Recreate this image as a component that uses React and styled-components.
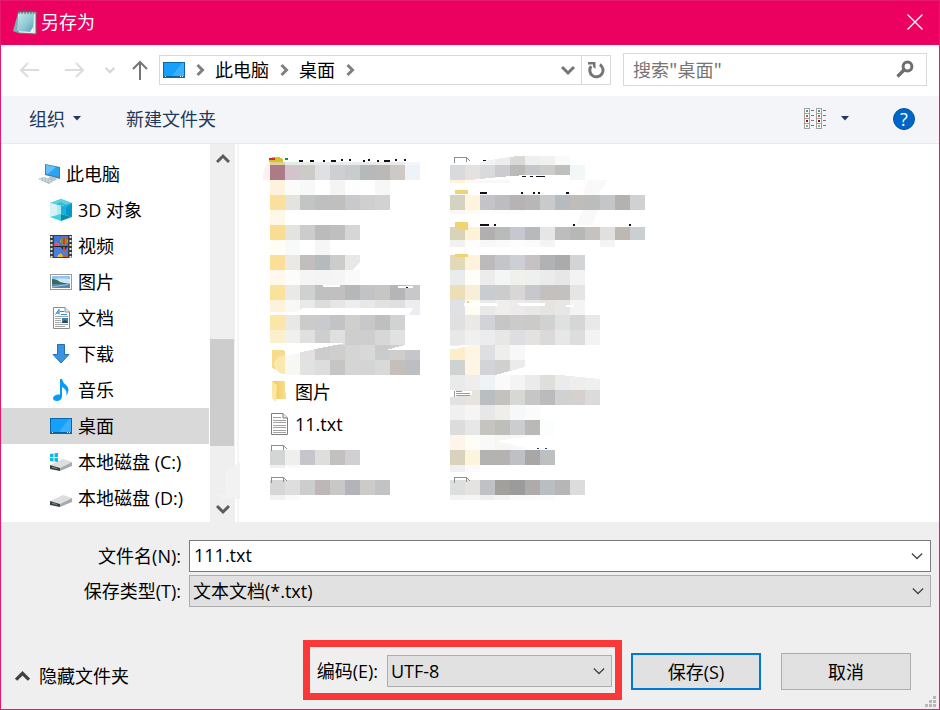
import React, { useState } from 'react';
import styled, { createGlobalStyle } from 'styled-components';

const GlobalStyle = createGlobalStyle`
  * {
    box-sizing: border-box;
  }

  body {
    margin: 0;
    background: #efefef;
  }

  body, button, input, select {
    font-family: "Open Sans", "Noto Sans CJK SC", sans-serif;
    font-size: 18px;
    line-height: 24px;
    color: #000;
  }

  svg {
    display: block;
    flex: none;
  }
`;

const Dialog = styled.div`
  position: relative;
  display: flex;
  flex-direction: column;
  min-height: 100vh;
  border: 1px solid #e8186d;
  background: #efefef;
`;

const PlainButton = styled.button`
  display: flex;
  align-items: center;
  justify-content: center;
  padding: 0;
  border: 0;
  background: transparent;
`;

const TitleBar = styled.header`
  display: flex;
  align-items: center;
  gap: 4px;
  height: 44px;
  padding: 0 12px 2px;
  background: #ec0060;
`;

const Title = styled.h1`
  flex: 1;
  margin: 0;
  font-size: 18px;
  font-weight: 400;
  color: #fff;
`;

const CloseButton = styled(PlainButton)`
  width: 24px;
  height: 24px;
`;

const NavBar = styled.div`
  display: flex;
  align-items: center;
  height: 51px;
  padding: 0 12px 2px 5px;
  background: #fff;
`;

const NavButton = styled(PlainButton)`
  width: ${props => props.$width}px;
  height: 30px;
`;

const Address = styled.div`
  display: flex;
  flex: 1;
  align-items: center;
  height: 30px;
  margin-right: 12px;
  padding-left: 3px;
  border: 1px solid #d9d9d9;
`;

const CrumbArrow = styled.span`
  display: flex;
  justify-content: center;
  width: 30px;
`;

const AddressMenu = styled(PlainButton)`
  width: 26px;
  height: 28px;
  margin-left: auto;
`;

const Refresh = styled(PlainButton)`
  width: 29px;
  height: 28px;
  border-left: 1px solid #d9d9d9;
`;

const SearchBox = styled.div`
  display: flex;
  align-items: center;
  width: 304px;
  height: 33px;
  padding: 0 12px 2px 9px;
  border: 1px solid #d9d9d9;
`;

const SearchInput = styled.input`
  flex: 1;
  min-width: 0;
  padding: 0;
  border: 0;
  outline: 0;
  background: transparent;
  font-family: "Noto Sans CJK SC", sans-serif;

  &::placeholder {
    color: #757575;
    opacity: 1;
  }
`;

const ToolBar = styled.div`
  display: flex;
  align-items: center;
  height: 48px;
  padding: 0 24px 2px 28px;
  border-bottom: 1px solid #e8e9eb;
  background: #f4f5f8;
`;

const ToolButton = styled(PlainButton)`
  gap: 8px;
  margin-right: ${props => props.$after || 0}px;
  color: #1e395b;
`;

const ToolSpace = styled.div`
  flex: 1;
`;

const Body = styled.div`
  display: flex;
  flex: 1;
  background: #fff;
`;

const Tree = styled.ul`
  width: 209px;
  margin: 0;
  padding: 12px 1px 6px 0;
  list-style: none;
`;

const TreeItem = styled(PlainButton)`
  justify-content: flex-start;
  gap: 6px;
  width: 100%;
  height: 36px;
  padding-left: ${props => (props.$root ? 37 : 49)}px;
  background: ${props => (props.$active ? '#d9d9d9' : 'transparent')};
`;

const IconBox = styled.span`
  display: flex;
  flex: none;
  justify-content: center;
  width: ${props => props.$width || 22}px;
`;

const ScrollBar = styled.div`
  position: relative;
  display: flex;
  flex-direction: column;
  width: 25px;
  background: #efefef;
`;

const ScrollGap = styled.div`
  flex: ${props => props.$grow};
`;

const ScrollThumb = styled.div`
  width: 24px;
  height: 107px;
  background: #cdcdcd;
`;

const ScrollButton = styled(PlainButton)`
  height: ${props => props.$height}px;
`;

const Smudge = styled.svg`
  position: absolute;
  right: -5px;
  bottom: 22px;
`;

const Splitter = styled.div`
  width: 4px;
  margin-right: 31px;
  border: solid #fff;
  border-width: 0 0 0 2px;
  background: #f5f5f5;
`;

const Files = styled.div`
  display: grid;
  flex: 1;
  grid-template-columns: 180px 1fr;
`;

const FileColumn = styled.div`
  display: flex;
  flex-direction: column;
`;

const FileRow = styled(PlainButton)`
  justify-content: flex-start;
  gap: 7px;
  height: 32px;
`;

const MosaicSvg = styled.svg`
  overflow: visible;
`;

const Fields = styled.div`
  display: grid;
  grid-template-columns: 180px 1fr;
  gap: 3px 8px;
  align-items: center;
  padding: 18px 8px 33px 0;
`;

const Label = styled.label`
  text-align: right;
  white-space: nowrap;
`;

const Combo = styled.div`
  display: flex;
  height: 32px;
  border: 1px solid #7a7a7a;
  background: #fff;
`;

const NameInput = styled.input`
  flex: 1;
  min-width: 0;
  padding: 0 4px 2px;
  border: 0;
  outline: 0;
  background: transparent;
`;

const ComboButton = styled(PlainButton)`
  width: 26px;
`;

const SelectBox = styled.div`
  display: grid;
  align-items: center;
  width: ${props => props.$width || 'auto'};

  > * {
    grid-area: 1 / 1;
  }

  > svg {
    justify-self: end;
    margin-right: 7px;
    pointer-events: none;
  }
`;

const Select = styled.select`
  appearance: none;
  width: 100%;
  height: 32px;
  padding: 0 30px 0 3px;
  border: 1px solid #adadad;
  border-radius: 0;
  outline: 0;
  background: #e1e1e1;
`;

const Footer = styled.footer`
  display: flex;
  align-items: center;
  height: 69px;
  padding: 0 28px 6px 14px;
`;

const HideButton = styled(PlainButton)`
  align-self: flex-end;
  gap: 9px;
  height: 54px;
  margin-right: auto;
`;

const Encoding = styled.div`
  display: flex;
  align-items: center;
  align-self: flex-start;
  gap: 9px;
  height: 60px;
  margin-right: 9px;
  padding: 2px 3px 0 7px;
  border: 7px solid #fb3838;
`;

const PushButton = styled.button`
  width: 130px;
  height: 37px;
  padding: 0;
  border: ${props => (props.$primary ? '2px solid #0078d7' : '1px solid #adadad')};
  background: #e1e1e1;

  & + & {
    margin-left: 20px;
  }
`;

const Grip = styled.svg`
  position: absolute;
  right: 3px;
  bottom: 2px;
`;

/* small line icons */

const Chevron = ({ dir = 'down', size = 14, color = '#757575', weight = 3 }) => {
  const paths = {
    down: 'M1 4 L7 10 L13 4',
    up: 'M1 10 L7 4 L13 10',
    right: 'M4.5 2 L9.5 7 L4.5 12',
  };
  return (
    <svg width={size} height={size} viewBox="0 0 14 14" fill="none" stroke={color} strokeWidth={weight}>
      <path d={paths[dir]} />
    </svg>
  );
};

const Arrow = ({ turn = 0, color = '#dcdcdc' }) => (
  <svg width="20" height="20" viewBox="0 0 20 20" fill="none" stroke={color} strokeWidth="2">
    <path d="M20 10 H2 M9 3 L2 10 L9 17" transform={`rotate(${turn} 10 10)`} />
  </svg>
);

const Caret = () => (
  <svg width="8" height="5" viewBox="0 0 8 5">
    <path d="M0 0 H8 L4 4.5 Z" fill="#1e395b" />
  </svg>
);

const RefreshIcon = () => (
  <svg width="18" height="18" viewBox="0 0 18 18" fill="none" stroke="#757575" strokeWidth="3">
    <path d="M12.8 3.6 A6.6 6.6 0 1 1 4.2 5.2" />
    <path d="M1 1 H8.5 V8 L6 5.8 V3.6 H1 Z" fill="#757575" stroke="none" />
  </svg>
);

const SearchIcon = () => (
  <svg width="18" height="18" viewBox="0 0 18 18" fill="none" stroke="#6e6e6e">
    <circle cx="11.5" cy="6.5" r="4.4" strokeWidth="3" />
    <path d="M8 10 L1.5 16.5" strokeWidth="3.4" />
  </svg>
);

const CloseIcon = () => (
  <svg width="16" height="16" viewBox="0 0 16 16" stroke="#fff" strokeWidth="1.3">
    <path d="M0.5 0.5 L15.5 15.5 M15.5 0.5 L0.5 15.5" />
  </svg>
);

const ViewIcon = () => (
  <svg width="22" height="21" viewBox="0 0 22 21">
    {[0, 12].map(x => ['#4a90b8', '#9a7030', '#c00000', '#8fb560'].map((color, i) => (
      <g key={color + x}>
        <rect x={x + 0.5} y={i * 5 + 0.5} width="5" height="5" fill="#fff" stroke="#a0a0a0" />
        <rect x={x + 2} y={i * 5 + 2} width="2" height="2" fill={color} />
        <path d={`M${x + 7} ${i * 5 + 2.5} h3`} stroke="#777" />
      </g>
    )))}
  </svg>
);

const HelpBadge = styled.span`
  display: flex;
  align-items: center;
  justify-content: center;
  width: 22px;
  height: 22px;
  border: 1px solid #0a4f96;
  border-radius: 50%;
  background: #0067c8;
  color: #fff;
  line-height: 20px;
`;

/* shell icons */

const NotepadIcon = () => (
  <svg width="24" height="26" viewBox="0 0 24 26">
    <defs>
      <linearGradient id="pad" x1="0" y1="0" x2="1" y2="1">
        <stop offset="0" stopColor="#c7e9ef" />
        <stop offset="0.6" stopColor="#8cc6d3" />
        <stop offset="1" stopColor="#4f9fb4" />
      </linearGradient>
    </defs>
    <path d="M5 4 L0 22 L5 24 Z" fill="#79aeba" />
    <path d="M5 3 H23 V25 L5 24 Z" fill="#e8efe6" stroke="#5b7773" />
    <path d="M5 4 H21 L20 23 L4 22 Z" fill="url(#pad)" />
    <path d="M20 23 L17 23 L20 18 Z" fill="#f6fbfb" />
    <path d="M6 1 V5 M9 1 V5 M12 1 V5 M15 1 V5 M18 1 V5 M21 1 V5" stroke="#54646a" />
  </svg>
);

const DesktopIcon = () => (
  <svg width="22" height="16" viewBox="0 0 22 16">
    <rect x="0.5" y="0.5" width="21" height="15" fill="#16a0fb" stroke="#0c67a8" />
    <path d="M9 14 L19 1 H21 V14 Z" fill="#3cb0ff" />
    <path d="M1 14.5 H21" stroke="#08629f" />
    <path d="M2 14.5 h1 M17 14.5 h1 M19 14.5 h1" stroke="#fff" />
  </svg>
);

const ComputerIcon = () => (
  <svg width="23" height="22" viewBox="0 0 23 22">
    <path d="M7 1 L22 4 V16 L7 12 Z" fill="#4d7d9c" />
    <path d="M8 2 L21 5 V14 L8 11 Z" fill="#2ba4f5" />
    <path d="M8 2 L18 4 L10 11 L8 10.5 Z" fill="#62c1fb" />
    <path d="M12 13 L17 14.5 L19 17 L15 18 L10 16 Z" fill="#b8c4cc" />
    <path d="M0 16 L6 14 L16 18 L11 21 Z" fill="#a9b9c5" />
    <path d="M2 16 L13 19.5 M5 15.2 L15 18.5" stroke="#e9eff3" strokeDasharray="2 1" />
  </svg>
);

const CubeIcon = () => (
  <svg width="22" height="22" viewBox="0 0 22 22">
    <path d="M11 0 L22 4 L11 7 L0 4 Z" fill="#3cbdcd" />
    <path d="M11 0 L22 4 L16 5.5 L11 3 L5 5.5 L0 4 Z" fill="#5fd0dc" />
    <path d="M0 4 L11 7 V18 L0 18 Z" fill="#b6e9ee" />
    <path d="M0 4 L7 6 V17 L0 18 Z" fill="#d6f4f5" />
    <path d="M11 7 L22 4 V18 L11 15 Z" fill="#13b3e0" />
    <path d="M16 9 L22 4 V18 L16 16 Z" fill="#0598cd" />
    <path d="M0 18 L11 15 V22 Z" fill="#3ad3df" />
    <path d="M22 18 L11 15 V22 Z" fill="#078f9f" />
  </svg>
);

const VideoIcon = () => (
  <svg width="22" height="23" viewBox="0 0 22 23">
    <rect width="22" height="23" fill="#3d3d3d" />
    <path d="M1.5 1 V23 M20.5 1 V23" stroke="#e4e4e4" strokeWidth="2" strokeDasharray="2 2" />
    <rect x="4" y="1" width="14" height="10" fill="#3f78d8" />
    <rect x="4" y="12" width="14" height="10" fill="#4a80dc" />
    <path d="M4 9 Q6 6 9 8 L10 11 H4 Z" fill="#e0566a" />
    <circle cx="14" cy="6" r="3.5" fill="#ffd21f" />
    <path d="M14 2.5 V9.5" stroke="#d23b1c" strokeWidth="2" />
    <path d="M12 3 V9 M16 3 V9" stroke="#4a3a1a" />
    <path d="M4 11.5 H18" stroke="#1e1e1e" />
    <path d="M10 11 L18 11 L15 15 H13 Z" fill="#2c2c2c" />
    <path d="M14 12 V16" stroke="#e0442c" strokeWidth="2" />
    <path d="M7 22 Q9 17 12 19 L13 22 Z" fill="#f3b91e" />
    <path d="M13 22 L15 19 L18 22 Z" fill="#d9542b" />
  </svg>
);

const PictureIcon = () => (
  <svg width="22" height="16" viewBox="0 0 22 16">
    <rect x="0.5" y="0.5" width="21" height="15" fill="#fff" stroke="#9a9a9a" />
    <rect x="2" y="2" width="18" height="12" fill="#8cc4f2" />
    <path d="M2 6 Q8 3 20 5 V9 H2 Z" fill="#cfe8f8" />
    <path d="M2 5 Q7 5 10 8 L19 10 H2 Z" fill="#3c6a58" />
    <rect x="2" y="10" width="18" height="4" fill="#5687a8" />
    <path d="M2 13 L18 10.5" stroke="#a3c5d8" />
  </svg>
);

const DocumentIcon = () => (
  <svg width="17" height="22" viewBox="0 0 17 22">
    <path d="M0.5 0.5 H12 L16.5 5 V21.5 H0.5 Z" fill="#fff" stroke="#8c8c8c" />
    <path d="M12 0.5 V5 H16.5" fill="#eee" stroke="#8c8c8c" />
    <path d="M2.5 7.5 L6 2.5 V7.5 M3.5 6 H6" fill="none" stroke="#1b7fc4" />
    <path d="M7 4.5 H11 M8 7.5 H14" stroke="#2a90d6" />
    <path d="M2 9.5 H15 M2 11.5 H8 M2 13.5 H8 M2 15.5 H8 M2 17.5 H15 M2 19.5 H12" stroke="#a5a5a5" />
    <rect x="9" y="11" width="6" height="5" fill="#3c7fb5" />
    <path d="M9 15 L12 13 L15 15 V16 H9 Z" fill="#2a4f47" />
  </svg>
);

const DownloadIcon = () => (
  <svg width="18" height="20" viewBox="0 0 18 20">
    <path d="M5.5 0.5 H12.5 V10.5 H17 L9 19 L1 10.5 H5.5 Z" fill="#3a94e6" stroke="#2470b8" />
  </svg>
);

const MusicIcon = () => (
  <svg width="18" height="22" viewBox="0 0 18 22">
    <path d="M8 0 H10 Q11 4 14 6 Q19 10 14 17 Q16 11 10 8 V18 Q9 22 5 22 Q1 22 1 19 Q2 15 8 15.5 Z" fill="#0a9bf5" />
  </svg>
);

const DriveIcon = ({ system }) => (
  <svg width="22" height="20" viewBox="0 0 22 20">
    <path d="M0 13 L13 7 L22 10 L10 16 Z" fill="#dcdfe2" />
    <path d="M22 10 V14 L10 19 V16 Z" fill="#a8abae" />
    <path d="M0 13 L10 16 V19 L0 17 Z" fill="#3a3f40" />
    <path d="M2 15.2 L7 16.5" stroke="#6f9a78" />
    {system && <path d="M0 2 L3.5 1.5 V5 H0 Z M4.5 1.3 L8 1 V5 H4.5 Z M0 6 H3.5 V9.5 L0 9 Z M4.5 6 H8 V10 L4.5 9.6 Z" fill="#10b5ea" />}
  </svg>
);

const FolderIcon = () => (
  <svg width="14" height="22" viewBox="0 0 14 22">
    <defs>
      <linearGradient id="folder">
        <stop offset="0" stopColor="#ecc75f" />
        <stop offset="1" stopColor="#fbdf8c" />
      </linearGradient>
    </defs>
    <path d="M0 0 H13 V11 L14 12 V18 H4 Z" fill="url(#folder)" />
    <path d="M0 0 L5 4 L4 21 L0 17 Z" fill="#fde6a2" />
  </svg>
);

const TextFileIcon = () => (
  <svg width="17" height="22" viewBox="0 0 17 22">
    <path d="M0.5 0.5 H12 L16.5 5 V21.5 H0.5 Z" fill="#fff" stroke="#7d7d7d" />
    <path d="M12 0.5 V5 H16.5" fill="#e8e8e8" stroke="#7d7d7d" />
    <path d="M2 4.5 H10 M2 7.5 H15 M2 9.5 H15 M2 12.5 H15 M2 14.5 H15 M2 17.5 H15 M2 19.5 H15" stroke="#a0a0a0" />
  </svg>
);

/* Pixelated file names. Each entry: row on the 15px grid, then the cell colours.
   A row may also have its own top and height where it is cut off. */

const leftCells = [
  { row: 0, top: 18, h: 3, c: 'e2cfa0 e1eee2 e9ebea e9ebea e9ebea eaebeb e9ebea ebebeb ebebeb f4f7f9' },
  { row: 0, c: 'ad7b87 d2c3cc cccbc8 dfe0e3 cdcfd2 c9cccc b6b9ba bab9b6 cdc9c5 edf3f8' },
  { row: 1, c: 'fdf3dd fbfbf9 f7f9f8 ffffff f4f4f2 fdfdfd ffffff f7f7f7' },
  { row: 2, c: 'fae09c e4e3de c3c5c4 c0bfbf c1bfbe c8c9cc cfcfd0 d2d2d2' },
  { row: 3, c: 'fef8e9' },
  { row: 4, c: 'f9dd92 e3e3df cccccd bbbbbb bfbfbf d6d6d6' },
  { row: 5, c: 'fffdf5 f8faf9 ffffff f7f6f7' },
  { row: 6, c: 'fbdf96 ebe9e5 c0bfbd b5babd cccccb e7e8e8' },
  { row: 7, c: 'fff8ec fcfcfb f5f5f5 f4f4f5 f5f5f5 fafafa' },
  { row: 8, c: 'f9e29c e9e9e8 cfd1d1 c1c0c1 c1bfbf b6b8b8 c3c3c5 c6c6c5 b4b5b7 c8c8c8' },
  { row: 9, c: 'fdf3db faf8f7 e8eaea dcdcdb e6e6e6 ecedf0 e8e8e8 e2e2e2 dfdfe0 ecedf0' },
  { row: 10, c: 'fce5a8 e8e8e7 cbcbc9 c9cacd c2c4c4 cfcfcb c8c8ca bebfbf d1d2d4' },
  { row: 11, c: 'fbf0cc f0f0ef e0e0df cecece dfdfdf d0cdcf cecece d7d7d7 e0e1e1' },
  { row: 12, c: 'ffffff f8f8f9 e2e1df cccccd cfcecd d5d5d6 d8d8d8 c9cccb cfcecc c5c6ca' },
  { row: 13, c: 'ffffff f8f7f2 e0e3e2 dddddd c7c5c3 d4d6d5 d4d4d4 d8dada c4bfbb bbbfc2' },
  { row: 19, c: 'd4d6d6 efefed c5c5cb dededd c2c1bf cfcfd4' },
  { row: 20, h: 3, c: 'f0f0f0 fafafa' },
  { row: 21, c: 'd6d6d6 dedede cdcdcd beb7b7 c8c8c6 b3b4b9 cdcbc9 c1c3c5' },
  { row: 22, h: 5, c: 'f0f3f2 fafafa' },
];

const rightCells = [
  { row: 0, top: 12, h: 9, c: 'ffffff ffffff f2f2f2 ededed d9d9d6 eeefef f0f1f0 fafafa' },
  { row: 0, c: 'd9dadb e5e1de d9dadc cbcccf bcbab8 c6c7ca cccccb bfc0be f2f8f8' },
  { row: 1, h: 3, c: 'fff3dc fcf8f5 f8f8f8 f8f8f8' },
  { row: 2, c: 'd4d3c1 fff5de c4c4c8 bbbdc0 b7b3b4 b9b7b5 c9cbca b5bbbf bfbcba babdbb c5c6ca b3b2b0 cfd1d3' },
  { row: 3, h: 4, c: 'fbf8ef fefbf3 fcfcfc fcfcfc fcfcfc' },
  { row: 4, top: 83, h: 13, c: 'd8d4b8 fff3d7 b1afaf b9bbba c7c8cf b8b9ba e6e6e7 bcbdbc b5b8b4 c5c2bf e1e0e1 bdb8b2 cbced3' },
  { row: 5, h: 7, c: 'f2f1ef fdfdfd f8f8f8 fafafb fcfdfd fafbfa f4f4f4 ffffff ffffff ffffff f4f4f4' },
  { row: 6, c: 'e1d9b7 fff3db bdbabc c4c5c8 ccd0d4 c6c2c4 b0b2b4 ababab d3d4d6' },
  { row: 7, c: 'e9ebed fffdf8 ececec f4f6f5 f0f0ed eef0ef ebebeb e7e7e7 f3f3f3' },
  { row: 8, c: 'ecdfb8 f7efd7 c9cdd1 cdcccc d9d7d5 c7c8cd c3c0be c2c1c0 e5e5e5' },
  { row: 9, c: 'dee2e5 fffcf3 e9e9e9 efeeec eceaea e9e8e8 e5e4e1 e8e7e5 f4f4f4' },
  { row: 10, c: 'e0e0e0 ebe9e7 d2d3d8 c6c6c6 cbcbca cccac8 cfd2d0 dfe1e0 d4d7d6 e9e9e9' },
  { row: 11, c: 'e7e9e8 eff0ef ececee e8e7e5 dcdee1 e3e2e0 dcdad8 e5e7e9 dddddd f3f3f3' },
  { row: 12, c: 'fceec6 fef5e5 dddfe2 eeeeed f8f8f8' },
  { row: 13, c: 'cfd2d3 fff5e4 d4d4d6 d1d0ce ebebeb' },
  { row: 14, c: 'e9ebea f0eeec f0f3f6 fafafa f4f4f4 ebebeb dfdedb ebebed eeeeee efefef' },
  { row: 15, c: 'e1e2e1 e7e4de b9bec1 c4c2bf d7d7d4 c6c6c6 bbbbbb cfd2d0 d4d1cf dbdbdd' },
  { row: 16, c: 'f0f0f0 f5f5f5 e7e7e7 efeeeb f6f8fb fbfbfb' },
  { row: 17, c: 'dcdcdc e7e7e7 c5c4c1 bebebb cccdcf bab9b7 fbfefd' },
  { row: 18, c: 'fff6e9 fffdf8 f9f9f9 f6f6f3 f8f8f8 fbfbfb fbfbfb' },
  { row: 19, c: 'd9d3be fcf5dd b3b3b1 b5b3b1 bfc0c3 a8a6a7 bebfc1' },
  { row: 20, h: 7, c: 'eff0f0 fafafa' },
  { row: 21, c: 'dcdfde e4e3e1 bfc1c4 a1a09d 9c9b9b adacaa b9bec1 b6b6b6 dcdcdc' },
  { row: 22, h: 5, c: 'f2f4f4 f6f5f5 efeff2 f5f3f5 fbfaf9 fbfaf8 fafbfb' },
];

const Mosaic = ({ cells, from = 0, to, children }) => (
  <MosaicSvg width="180" height={to - from} viewBox={`0 ${from} 180 ${to - from}`} shapeRendering="crispEdges" aria-hidden="true">
    {cells.map(({ row, top, h = 15, c }) => {
      const y = top || 21 + row * 15;
      if (y < from || y >= to) return null;
      return c.split(' ').map((color, i) => (
        <rect key={`${y}-${i}`} x={i * 15} y={y} width="15" height={h} fill={`#${color}`} />
      ));
    })}
    {children}
  </MosaicSvg>
);

const PageTop = ({ x, y }) => (
  <path d={`M${x} ${y + 5} V${y} H${x + 12} L${x + 16} ${y + 4} M${x + 12} ${y} V${y + 4}`} fill="none" stroke="#8f8f8f" />
);

const places = [
  { name: '此电脑', icon: <ComputerIcon />, root: true },
  { name: '3D 对象', icon: <CubeIcon /> },
  { name: '视频', icon: <VideoIcon /> },
  { name: '图片', icon: <PictureIcon /> },
  { name: '文档', icon: <DocumentIcon /> },
  { name: '下载', icon: <DownloadIcon /> },
  { name: '音乐', icon: <MusicIcon /> },
  { name: '桌面', icon: <DesktopIcon /> },
  { name: '本地磁盘 (C:)', icon: <DriveIcon system /> },
  { name: '本地磁盘 (D:)', icon: <DriveIcon /> },
];

const Sidebar = () => {
  const [active, setActive] = useState('桌面');

  return (
    <Tree>
      {places.map(place => (
        <li key={place.name}>
          <TreeItem $root={place.root} $active={place.name === active} onClick={() => setActive(place.name)}>
            <IconBox>{place.icon}</IconBox>
            {place.name}
          </TreeItem>
        </li>
      ))}
    </Tree>
  );
};

const FileList = () => (
  <Files>
    <FileColumn>
      <Mosaic cells={leftCells} to={232}>
        <path d="M-7 36 Q-7 22 0 18 V36 Z" fill="#fdf1f0" />
        <path d="M-1 15 Q6 10 13 15 V18 H-1 Z" fill="#d6c21e" />
        <path d="M-1 14 H5 V16 H-1 Z" fill="#d5262b" />
        <path d="M15 15 h3" stroke="#1f8c4b" strokeWidth="2" />
        <path d="M29 16.5 h4 M40 16.5 h4 M53 16.5 h2 M61 16.5 h5 M71 15.5 h2 M79 15.5 h2 M93 16.5 h2 M98 15.5 h2 M107 16.5 h2 M114 16.5 h6 M125 15.5 h2 M134 15.5 h2" stroke="#101018" strokeWidth="2" />
        <path d="M82 126 L90 119 V126 Z" fill="#fff" />
        <path d="M53 141.5 H70 M128 142.5 H143" stroke="#fff" strokeWidth="2" />
        <path d="M136 143.5 h2" stroke="#101018" />
        <path d="M22 171 L33 164 H143 L139 171 Z M0 168 H25 V171 H0 Z" fill="#fff" />
        <path d="M0 199 H75 L45 205 L15 212 V201 H0 Z" fill="#fff" />
        <path d="M116 206 L135 201 V199 H150 V206 Z" fill="#fff" />
        <path d="M2 206 H13 L15 207 V230 L2 224 Z" fill="#f7dc8c" />
        <path d="M15 211 Q4 213 4 221 Q6 230 15 230 Z" fill="#fbe8ac" />
      </Mosaic>
      <FileRow><IconBox $width={18}><FolderIcon /></IconBox>图片</FileRow>
      <FileRow><IconBox $width={18}><TextFileIcon /></IconBox>11.txt</FileRow>
      <Mosaic cells={leftCells} from={296} to={378}>
        <PageTop x={1.5} y={301.5} />
        <PageTop x={1.5} y={333.5} />
      </Mosaic>
    </FileColumn>
    <FileColumn>
      <Mosaic cells={rightCells} to={378}>
        <path d="M30 12 H68 L45 15 L30 18 Z" fill="#fff" />
        <path d="M20 36 L50 33 L75 31 H120 V36 Z" fill="#fff" />
        <path d="M72 32.5 h4 M80 32.5 h3 M86 32.5 h9" stroke="#101018" />
        <path d="M33 16.5 h3" stroke="#101018" />
        <path d="M138 36 H158 L148 51 H133 Z M133 66 H148 L142 81 H126 Z" fill="#f9f9f9" />
        <rect x="5" y="46" width="13" height="4" fill="#f3d272" />
        <path d="M30 48.5 h7 M71 48.5 h2 M83 48.5 h2 M88 48.5 h2 M116 48.5 h3" stroke="#101018" strokeWidth="2" />
        <path d="M5 78 H18 V86 L5 84 Z" fill="#f3d272" />
        <path d="M30 80.5 h9 M44 80.5 h2 M123 80.5 h2 M179 80.5 h2" stroke="#101018" strokeWidth="2" />
        <path d="M5 110 H18 V113 H5 Z" fill="#f3d272" />
        <path d="M14 159 H47 L48 162 H14 Z M68 159 H95 V162 H70 Z M116 161 H124 V163 H116 Z" fill="#fff" />
        <rect x="17" y="157" width="2" height="2" fill="#f5cf6c" />
        <path d="M0 202 L19 201 L8 205 H0 Z M45 231 L75 223 V231 Z" fill="#fff" />
        <path d="M45 231 H110 L150 235 V231 Z" fill="#fff" />
        <path d="M0 246 H5 V247 H22 V251 H14 L4 253 H0 Z" fill="#fff" />
        <path d="M4.5 247 V253 M6 247.5 H12 M6 249.5 H20 M6 251.5 H20" stroke="#999" />
        <path d="M46 297 L75 293 L105 291 V306 H82 L60 300 Z" fill="#fff" />
        <path d="M87 304.5 h2 M95 304.5 h2" stroke="#1b4a80" />
        <PageTop x={4.5} y={13.5} />
        <PageTop x={4.5} y={333.5} />
      </Mosaic>
    </FileColumn>
  </Files>
);

const App = () => {
  const [fileName, setFileName] = useState('111.txt');

  return (
    <>
      <GlobalStyle />
      <Dialog>
        <TitleBar>
          <NotepadIcon />
          <Title>另存为</Title>
          <CloseButton aria-label="关闭"><CloseIcon /></CloseButton>
        </TitleBar>

        <NavBar>
          <NavButton $width={46} aria-label="后退"><Arrow /></NavButton>
          <NavButton $width={46} aria-label="前进"><Arrow turn={180} /></NavButton>
          <NavButton $width={23} aria-label="历史"><Chevron size={10} color="#d6d6d6" /></NavButton>
          <NavButton $width={38} aria-label="上移"><Arrow turn={90} color="#757575" /></NavButton>
          <Address>
            <DesktopIcon />
            <CrumbArrow><Chevron dir="right" color="#808080" /></CrumbArrow>
            <PlainButton>此电脑</PlainButton>
            <CrumbArrow><Chevron dir="right" color="#808080" /></CrumbArrow>
            <PlainButton>桌面</PlainButton>
            <CrumbArrow><Chevron dir="right" color="#808080" /></CrumbArrow>
            <AddressMenu aria-label="以前的位置"><Chevron /></AddressMenu>
            <Refresh aria-label="刷新"><RefreshIcon /></Refresh>
          </Address>
          <SearchBox>
            <SearchInput type="text" placeholder={'搜索"桌面"'} aria-label="搜索" />
            <SearchIcon />
          </SearchBox>
        </NavBar>

        <ToolBar>
          <ToolButton $after={45}>组织 <Caret /></ToolButton>
          <ToolButton>新建文件夹</ToolButton>
          <ToolSpace />
          <ToolButton $after={15} aria-label="视图"><ViewIcon /></ToolButton>
          <ToolButton $after={44} aria-label="更多选项"><Caret /></ToolButton>
          <ToolButton><HelpBadge>?</HelpBadge></ToolButton>
        </ToolBar>

        <Body>
          <Sidebar />
          <ScrollBar>
            <ScrollButton $height={30} aria-label="向上"><Chevron dir="up" color="#5c5c5c" /></ScrollButton>
            <ScrollGap $grow={165} />
            <ScrollThumb />
            <ScrollGap $grow={50} />
            <ScrollButton $height={26} aria-label="向下"><Chevron color="#5c5c5c" /></ScrollButton>
            <Smudge width="24" height="38" viewBox="0 0 24 38">
              <path d="M9 10 L24 0 V37 H6 L0 32 H9 Z" fill="#f2f2f2" />
            </Smudge>
          </ScrollBar>
          <Splitter />
          <FileList />
        </Body>

        <Fields>
          <Label htmlFor="name">文件名(N):</Label>
          <Combo>
            <NameInput id="name" type="text" value={fileName} onChange={e => setFileName(e.target.value)} />
            <ComboButton aria-label="最近的文件名"><Chevron size={12} color="#444" weight={1.5} /></ComboButton>
          </Combo>
          <Label htmlFor="type">保存类型(T):</Label>
          <SelectBox>
            <Select id="type">
              <option>文本文档(*.txt)</option>
            </Select>
            <Chevron size={12} color="#444" weight={1.5} />
          </SelectBox>
        </Fields>

        <Footer>
          <HideButton><Chevron dir="up" size={15} color="#404040" />隐藏文件夹</HideButton>
          <Encoding>
            <label htmlFor="encoding">编码(E):</label>
            <SelectBox $width="225px">
              <Select id="encoding">
                <option>UTF-8</option>
              </Select>
              <Chevron size={12} color="#444" weight={1.5} />
            </SelectBox>
          </Encoding>
          <PushButton $primary>保存(S)</PushButton>
          <PushButton>取消</PushButton>
        </Footer>

        <Grip width="11" height="11" viewBox="0 0 11 11" fill="#b9b9b9">
          <path d="M8 0h3v3h-3z M4 4h3v3h-3z M8 4h3v3h-3z M0 8h3v3h-3z M4 8h3v3h-3z M8 8h3v3h-3z" />
        </Grip>
      </Dialog>
    </>
  );
};

export default App;
